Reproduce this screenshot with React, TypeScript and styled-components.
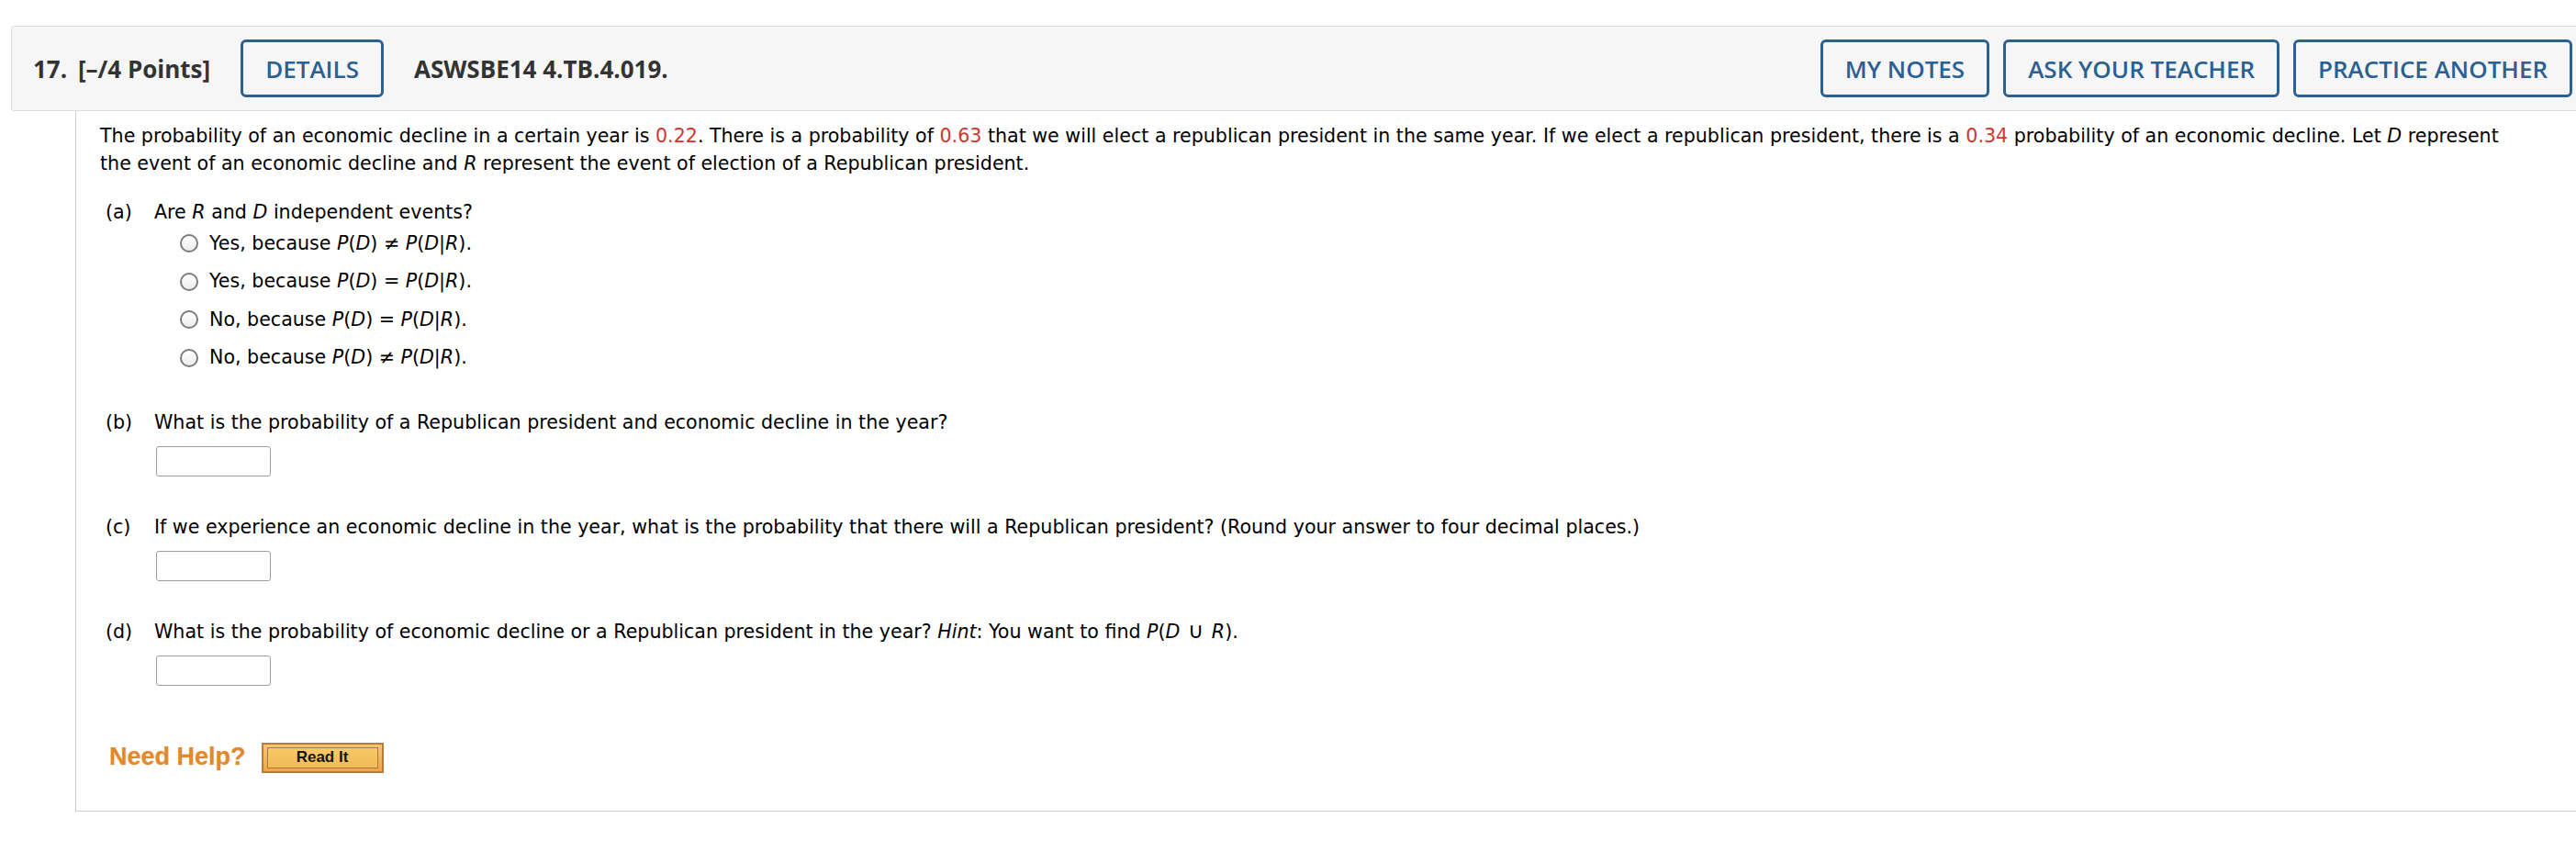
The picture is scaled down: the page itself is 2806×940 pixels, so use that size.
import React from "react";
import styled, { createGlobalStyle } from "styled-components";

const GlobalStyle = createGlobalStyle`
  html, body {
    margin: 0;
    padding: 0;
    background: #ffffff;
    overflow: hidden;
  }
`;

const Page = styled.div`
  padding: 28px 0 0 12px;
  width: 2806px;
  box-sizing: border-box;
`;

const QuestionHeader = styled.div`
  display: flex;
  align-items: center;
  gap: 33px;
  height: 91px;
  margin-right: -4px;
  padding: 0 7px 0 23px;
  background: #f6f6f6;
  border: 1px solid #dcdcdc;
  border-radius: 3px;
  font-family: "Open Sans", "Liberation Sans", sans-serif;
`;

const Title = styled.span`
  font-size: 26px;
  font-weight: 700;
  color: #333333;
  white-space: nowrap;
`;

const Number = styled.span`
  margin-right: 5px;
`;

const HeaderButton = styled.button`
  height: 63px;
  padding: 0 24px;
  background: transparent;
  border: 3px solid #2c5f92;
  border-radius: 6px;
  color: #2c5f92;
  font-family: "Open Sans", "Liberation Sans", sans-serif;
  font-size: 26px;
  font-weight: 600;
  white-space: nowrap;
  cursor: pointer;
`;

const ButtonGroup = styled.div`
  display: flex;
  gap: 15px;
  margin-left: auto;
`;

const QuestionBody = styled.div`
  margin-left: 70px;
  padding: 13px 0 41px 26px;
  border-left: 1px solid #cccccc;
  border-bottom: 1px solid #cccccc;
  font-family: "DejaVu Sans", Verdana, sans-serif;
  font-size: 20.6px;
  line-height: 29.5px;
  color: #000000;
`;

const Stem = styled.p`
  margin: 0;
  max-width: 2640px;
`;

const Value = styled.span`
  color: #d3352d;
`;

const Part = styled.div<{ $top?: number }>`
  display: grid;
  grid-template-columns: 53px 1fr;
  margin-top: ${(p) => p.$top ?? 41}px;
  padding-left: 6px;
`;

const PartLabel = styled.span`
  white-space: nowrap;
`;

const PartContent = styled.div`
  display: flex;
  flex-direction: column;
  align-items: flex-start;
`;

const Options = styled.div`
  display: flex;
  flex-direction: column;
  gap: 12px;
  margin-top: 4.5px;
  margin-left: 28px;
`;

const Option = styled.label`
  display: flex;
  align-items: center;
  gap: 12px;
`;

const Radio = styled.span`
  width: 20px;
  height: 20px;
  box-sizing: border-box;
  border-radius: 50%;
  border: 2px solid #7c7c7c;
  background: linear-gradient(#ffffff, #ededed);
  flex-shrink: 0;
`;

const AnswerInput = styled.input`
  width: 125px;
  height: 33px;
  box-sizing: border-box;
  margin: 10.5px 0 0 2px;
  border: 1px solid #9d9d9d;
  border-radius: 3px;
  background: #ffffff;
`;

const Union = styled.span`
  font-size: 1.15em;
  line-height: 0;
  margin: 0 2px;
`;

const HelpRow = styled.div`
  display: flex;
  align-items: center;
  gap: 17px;
  margin: 62px 0 0 10px;
`;

const NeedHelp = styled.span`
  font-family: "Liberation Sans", Arial, sans-serif;
  font-size: 27px;
  font-weight: 700;
  color: #e2892d;
  text-shadow: 0 0 1px rgba(226, 137, 45, 0.5);
`;

const ReadIt = styled.button`
  width: 133px;
  height: 33px;
  box-sizing: border-box;
  padding: 3px 4px;
  border: 2px solid #b97c38;
  background: linear-gradient(#f6c57a, #efa448);
  cursor: pointer;
`;

const ReadItFace = styled.span`
  display: flex;
  align-items: center;
  justify-content: center;
  height: 100%;
  box-sizing: border-box;
  border: 1px solid #a57b47;
  background: linear-gradient(#f7c965, #f2bb55);
  font-family: "Liberation Sans", Arial, sans-serif;
  font-size: 17px;
  font-weight: 700;
  color: #161616;
`;

const V = styled.i``;

const cond = (rel: string) => (
  <>
    <V>P</V>(<V>D</V>) {rel} <V>P</V>(<V>D</V>|<V>R</V>).
  </>
);

const options = [
  ["Yes", "≠"],
  ["Yes", "="],
  ["No", "="],
  ["No", "≠"],
];

export default function App() {
  return (
    <Page>
      <GlobalStyle />
      <QuestionHeader>
        <Title>
          <Number>17.</Number> [–/4 Points]
        </Title>
        <HeaderButton>DETAILS</HeaderButton>
        <Title>ASWSBE14 4.TB.4.019.</Title>
        <ButtonGroup>
          <HeaderButton>MY NOTES</HeaderButton>
          <HeaderButton>ASK YOUR TEACHER</HeaderButton>
          <HeaderButton>PRACTICE ANOTHER</HeaderButton>
        </ButtonGroup>
      </QuestionHeader>

      <QuestionBody>
        <Stem>
          The probability of an economic decline in a certain year is{" "}
          <Value>0.22</Value>. There is a probability of <Value>0.63</Value>{" "}
          that we will elect a republican president in the same year. If we
          elect a republican president, there is a <Value>0.34</Value>{" "}
          probability of an economic decline. Let <V>D</V> represent the event
          of an economic decline and <V>R</V> represent the event of election
          of a Republican president.
        </Stem>

        <Part $top={23.5}>
          <PartLabel>(a)</PartLabel>
          <PartContent>
            <span>
              Are <V>R</V> and <V>D</V> independent events?
            </span>
            <Options>
              {options.map(([word, rel], i) => (
                <Option key={i}>
                  <Radio />
                  <span>
                    {word}, because {cond(rel)}
                  </span>
                </Option>
              ))}
            </Options>
          </PartContent>
        </Part>

        <Part>
          <PartLabel>(b)</PartLabel>
          <PartContent>
            <span>
              What is the probability of a Republican president and economic
              decline in the year?
            </span>
            <AnswerInput type="text" />
          </PartContent>
        </Part>

        <Part>
          <PartLabel>(c)</PartLabel>
          <PartContent>
            <span>
              If we experience an economic decline in the year, what is the
              probability that there will a Republican president? (Round your
              answer to four decimal places.)
            </span>
            <AnswerInput type="text" />
          </PartContent>
        </Part>

        <Part>
          <PartLabel>(d)</PartLabel>
          <PartContent>
            <span>
              What is the probability of economic decline or a Republican
              president in the year? <V>Hint</V>: You want to find{" "}
              <V>P</V>(<V>D</V> <Union>∪</Union> <V>R</V>).
            </span>
            <AnswerInput type="text" />
          </PartContent>
        </Part>

        <HelpRow>
          <NeedHelp>Need Help?</NeedHelp>
          <ReadIt>
            <ReadItFace>Read It</ReadItFace>
          </ReadIt>
        </HelpRow>
      </QuestionBody>
    </Page>
  );
}
